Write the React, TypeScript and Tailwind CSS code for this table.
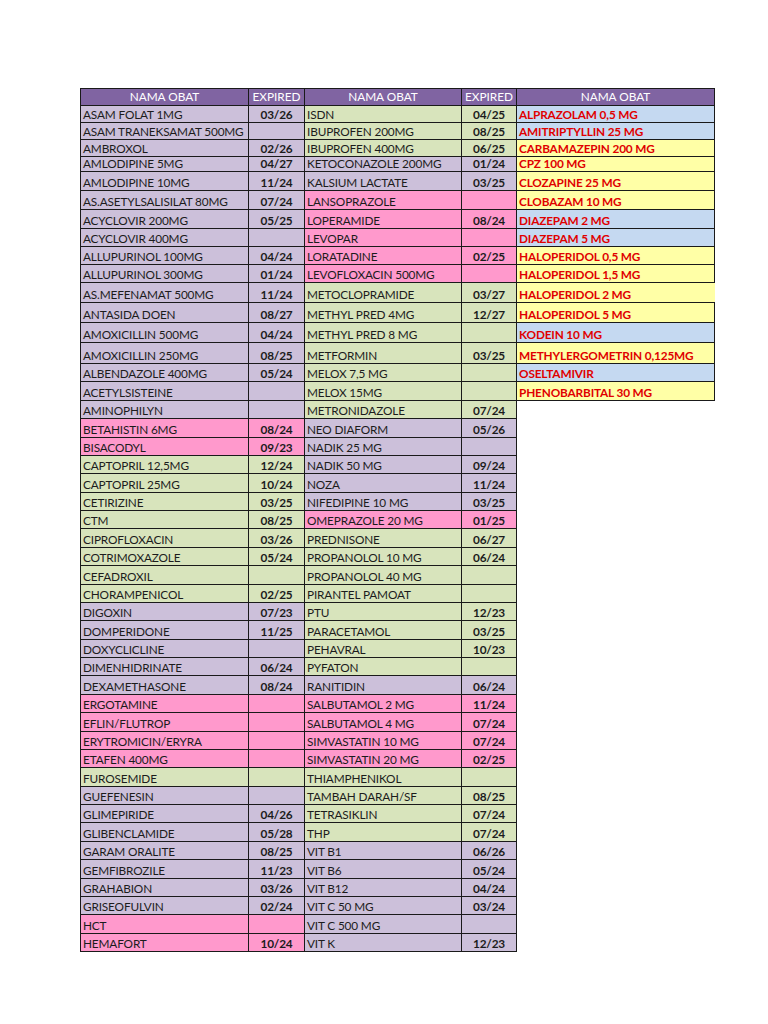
import React from "react";

type Tone = "u" | "g" | "p" | "b" | "y";

const BG: Record<Tone, string> = {
  u: "bg-[#ccc0da]",
  g: "bg-[#d8e4bc]",
  p: "bg-[#ff99cc]",
  b: "bg-[#c5d9f1]",
  y: "bg-[#ffffa6]",
};

// row heights, excel rows are not all the same
const HEIGHTS = [
  "h-[17px]", "h-[17px]", "h-[17px]", "h-[15px]", "h-[19px]", "h-[19px]", "h-[19px]",
  "h-[18px]", "h-[18px]", "h-[18px]", "h-[20px]", "h-[20px]", "h-[20px]", "h-[21px]",
];

// [name, exp, tone, name, exp, tone]
const ROWS: [string, string, Tone, string, string, Tone][] = [
  ["ASAM FOLAT 1MG", "03/26", "u", "ISDN", "04/25", "g"],
  ["ASAM TRANEKSAMAT 500MG", "", "u", "IBUPROFEN 200MG", "08/25", "g"],
  ["AMBROXOL", "02/26", "u", "IBUPROFEN 400MG", "06/25", "g"],
  ["AMLODIPINE 5MG", "04/27", "u", "KETOCONAZOLE 200MG", "01/24", "u"],
  ["AMLODIPINE 10MG", "11/24", "u", "KALSIUM LACTATE", "03/25", "u"],
  ["AS.ASETYLSALISILAT 80MG", "07/24", "u", "LANSOPRAZOLE", "", "p"],
  ["ACYCLOVIR 200MG", "05/25", "u", "LOPERAMIDE", "08/24", "p"],
  ["ACYCLOVIR 400MG", "", "u", "LEVOPAR", "", "p"],
  ["ALLUPURINOL 100MG", "04/24", "u", "LORATADINE", "02/25", "p"],
  ["ALLUPURINOL 300MG", "01/24", "u", "LEVOFLOXACIN 500MG", "", "p"],
  ["AS.MEFENAMAT 500MG", "11/24", "u", "METOCLOPRAMIDE", "03/27", "g"],
  ["ANTASIDA DOEN", "08/27", "u", "METHYL PRED 4MG", "12/27", "g"],
  ["AMOXICILLIN 500MG", "04/24", "u", "METHYL PRED 8 MG", "", "g"],
  ["AMOXICILLIN 250MG", "08/25", "u", "METFORMIN", "03/25", "g"],
  ["ALBENDAZOLE 400MG", "05/24", "u", "MELOX 7,5 MG", "", "g"],
  ["ACETYLSISTEINE", "", "u", "MELOX 15MG", "", "g"],
  ["AMINOPHILYN", "", "u", "METRONIDAZOLE", "07/24", "g"],
  ["BETAHISTIN 6MG", "08/24", "p", "NEO DIAFORM", "05/26", "u"],
  ["BISACODYL", "09/23", "p", "NADIK 25 MG", "", "u"],
  ["CAPTOPRIL 12,5MG", "12/24", "g", "NADIK 50 MG", "09/24", "u"],
  ["CAPTOPRIL 25MG", "10/24", "g", "NOZA", "11/24", "u"],
  ["CETIRIZINE", "03/25", "g", "NIFEDIPINE 10 MG", "03/25", "u"],
  ["CTM", "08/25", "g", "OMEPRAZOLE 20 MG", "01/25", "p"],
  ["CIPROFLOXACIN", "03/26", "g", "PREDNISONE", "06/27", "g"],
  ["COTRIMOXAZOLE", "05/24", "g", "PROPANOLOL 10 MG", "06/24", "g"],
  ["CEFADROXIL", "", "g", "PROPANOLOL 40 MG", "", "g"],
  ["CHORAMPENICOL", "02/25", "g", "PIRANTEL PAMOAT", "", "g"],
  ["DIGOXIN", "07/23", "u", "PTU", "12/23", "g"],
  ["DOMPERIDONE", "11/25", "u", "PARACETAMOL", "03/25", "g"],
  ["DOXYCLICLINE", "", "u", "PEHAVRAL", "10/23", "g"],
  ["DIMENHIDRINATE", "06/24", "u", "PYFATON", "", "g"],
  ["DEXAMETHASONE", "08/24", "u", "RANITIDIN", "06/24", "u"],
  ["ERGOTAMINE", "", "p", "SALBUTAMOL 2 MG", "11/24", "p"],
  ["EFLIN/FLUTROP", "", "p", "SALBUTAMOL 4 MG", "07/24", "p"],
  ["ERYTROMICIN/ERYRA", "", "p", "SIMVASTATIN 10 MG", "07/24", "p"],
  ["ETAFEN 400MG", "", "p", "SIMVASTATIN 20 MG", "02/25", "p"],
  ["FUROSEMIDE", "", "g", "THIAMPHENIKOL", "", "g"],
  ["GUEFENESIN", "", "u", "TAMBAH DARAH/SF", "08/25", "g"],
  ["GLIMEPIRIDE", "04/26", "u", "TETRASIKLIN", "07/24", "g"],
  ["GLIBENCLAMIDE", "05/28", "u", "THP", "07/24", "g"],
  ["GARAM ORALITE", "08/25", "u", "VIT B1", "06/26", "u"],
  ["GEMFIBROZILE", "11/23", "u", "VIT B6", "05/24", "u"],
  ["GRAHABION", "03/26", "u", "VIT B12", "04/24", "u"],
  ["GRISEOFULVIN", "02/24", "u", "VIT C 50 MG", "03/24", "u"],
  ["HCT", "", "p", "VIT C 500 MG", "", "u"],
  ["HEMAFORT", "10/24", "p", "VIT K", "12/23", "u"],
];

const PSIKO: [string, Tone][] = [
  ["ALPRAZOLAM 0,5 MG", "b"],
  ["AMITRIPTYLLIN 25 MG", "b"],
  ["CARBAMAZEPIN 200 MG", "y"],
  ["CPZ 100 MG", "y"],
  ["CLOZAPINE 25 MG", "y"],
  ["CLOBAZAM 10 MG", "y"],
  ["DIAZEPAM 2 MG", "b"],
  ["DIAZEPAM 5 MG", "b"],
  ["HALOPERIDOL 0,5 MG", "y"],
  ["HALOPERIDOL 1,5 MG", "y"],
  ["HALOPERIDOL 2 MG", "y"],
  ["HALOPERIDOL 5 MG", "y"],
  ["KODEIN 10 MG", "b"],
  ["METHYLERGOMETRIN 0,125MG", "y"],
  ["OSELTAMIVIR", "b"],
  ["PHENOBARBITAL 30 MG", "y"],
];

const cell = "border border-[#1a1a1a] p-0 pb-[1px] align-bottom leading-[12px] text-[11.8px] tracking-[-0.15px] whitespace-nowrap";
const head = "border border-[#1a1a1a] bg-[#8064a2] text-white text-center font-normal text-[11.8px] leading-[12px] h-[17px] p-0 align-middle";

export default function App() {
  return (
    <div className="min-h-[1024px] w-[768px] bg-white pt-[88px] pl-[80px] font-['Lato','Liberation_Sans',sans-serif] text-[#1c1c1c]">
      <table className="border-collapse table-fixed w-[634px]">
        <colgroup>
          <col className="w-[168px]" />
          <col className="w-[56px]" />
          <col className="w-[157px]" />
          <col className="w-[55px]" />
          <col className="w-[198px]" />
        </colgroup>
        <thead>
          <tr>
            <th className={head}>NAMA OBAT</th>
            <th className={head}>EXPIRED</th>
            <th className={head}>NAMA OBAT</th>
            <th className={head}>EXPIRED</th>
            <th className={head}>NAMA OBAT</th>
          </tr>
        </thead>
        <tbody>
          {ROWS.map((r, i) => {
            const h = HEIGHTS[i] ?? "h-[18.375px]";
            const ps = PSIKO[i];
            return (
              <tr key={i} className={h}>
                <td className={`${cell} ${BG[r[2]]} pl-[2px]`}>{r[0]}</td>
                <td className={`${cell} ${BG[r[2]]} text-center font-bold`}>{r[1]}</td>
                <td className={`${cell} ${BG[r[5]]} pl-[2px]`}>{r[3]}</td>
                <td className={`${cell} ${BG[r[5]]} text-center font-bold`}>{r[4]}</td>
                {ps ? (
                  <td
                    className={`${cell} ${BG[ps[1]]} pl-[2px] font-bold text-[#e00000] ${
                      i === 10 ? "border-r-0" : ""
                    }`}
                  >
                    {ps[0]}
                  </td>
                ) : (
                  <td className="p-0 border-0" />
                )}
              </tr>
            );
          })}
        </tbody>
      </table>
    </div>
  );
}
